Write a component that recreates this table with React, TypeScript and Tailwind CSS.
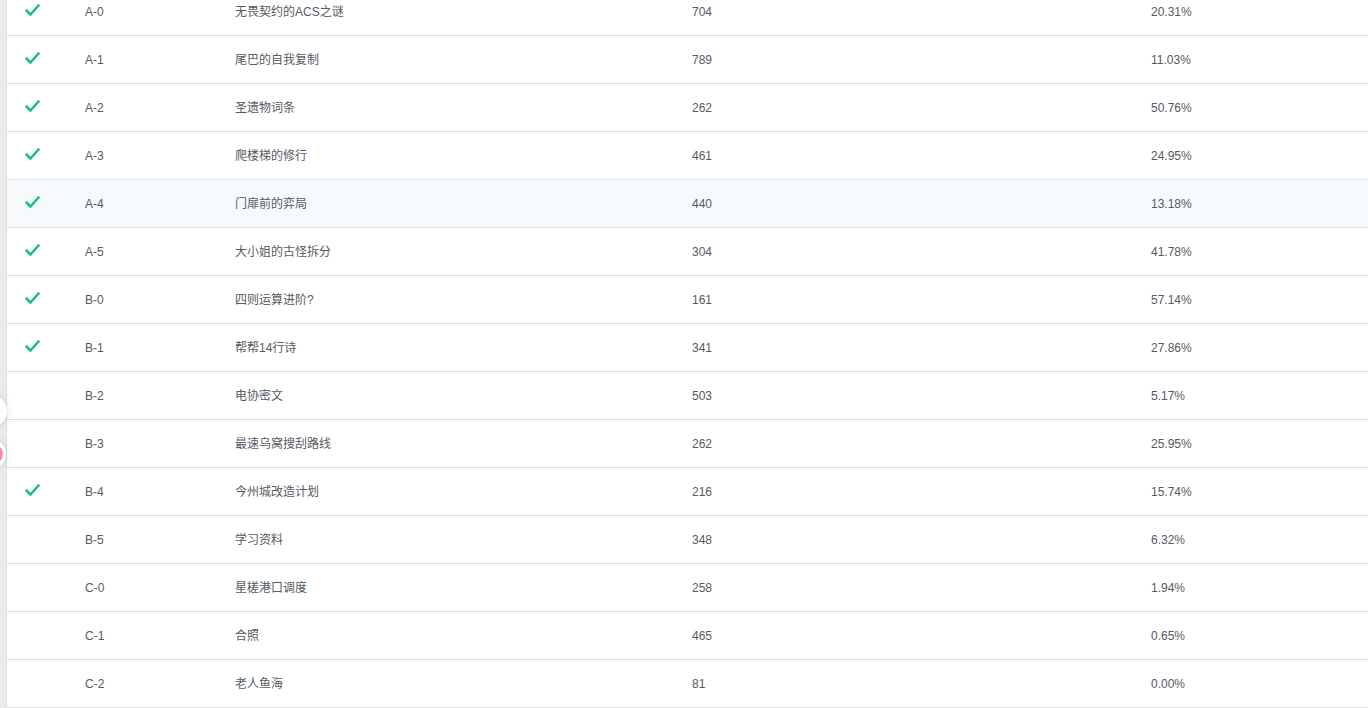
import React from "react";

const rows = [
  { done: true, id: "A-0", title: "无畏契约的ACS之谜", count: 704, rate: "20.31%" },
  { done: true, id: "A-1", title: "尾巴的自我复制", count: 789, rate: "11.03%" },
  { done: true, id: "A-2", title: "圣遗物词条", count: 262, rate: "50.76%" },
  { done: true, id: "A-3", title: "爬楼梯的修行", count: 461, rate: "24.95%" },
  { done: true, id: "A-4", title: "门扉前的弈局", count: 440, rate: "13.18%", hover: true },
  { done: true, id: "A-5", title: "大小姐的古怪拆分", count: 304, rate: "41.78%" },
  { done: true, id: "B-0", title: "四则运算进阶?", count: 161, rate: "57.14%" },
  { done: true, id: "B-1", title: "帮帮14行诗", count: 341, rate: "27.86%" },
  { done: false, id: "B-2", title: "电协密文", count: 503, rate: "5.17%" },
  { done: false, id: "B-3", title: "最速乌窝搜刮路线", count: 262, rate: "25.95%" },
  { done: true, id: "B-4", title: "今州城改造计划", count: 216, rate: "15.74%" },
  { done: false, id: "B-5", title: "学习资料", count: 348, rate: "6.32%" },
  { done: false, id: "C-0", title: "星槎港口调度", count: 258, rate: "1.94%" },
  { done: false, id: "C-1", title: "合照", count: 465, rate: "0.65%" },
  { done: false, id: "C-2", title: "老人鱼海", count: 81, rate: "0.00%" },
];

const Check = () => (
  <svg width="15" height="13" viewBox="0 0 15 13" fill="none">
    <path d="M1.5 6.5 L5.5 10.5 L13.5 1.5" stroke="#19c274" strokeWidth="2.6" strokeLinecap="round" strokeLinejoin="round" />
  </svg>
);

export default function App() {
  return (
    <div
      className="relative flex h-[708px] w-full overflow-hidden bg-[#ececec]"
      style={{ fontFamily: '"Liberation Sans", Arial, "Noto Sans CJK SC", sans-serif' }}
    >
      {/* gray page edge */}
      <div className="w-[7px] shrink-0 bg-[#ebebeb] border-r border-[#dedede]" />

      {/* table */}
      <div className="flex-1 bg-white">
        <div className="mt-[-12px]">
          {rows.map((r) => (
            <div
              key={r.id}
              className={`grid h-[48px] grid-cols-[78px_150px_457px_459px_1fr] items-center border-b border-[#e0e0e0] text-[12px] text-[#555a62] ${
                r.hover ? "bg-[#f6fafd]" : "bg-white"
              }`}
            >
              <div className="flex pl-[18px] pb-[2px]">{r.done && <Check />}</div>
              <div>{r.id}</div>
              <div>{r.title}</div>
              <div>{r.count}</div>
              <div>{r.rate}</div>
            </div>
          ))}
        </div>
      </div>

      {/* floating side buttons, mostly off screen */}
      <div className="absolute left-[-25px] top-[395px] h-[32px] w-[32px] rounded-full bg-white shadow-[0_0_8px_rgba(0,0,0,0.12)]" />
      <div className="absolute left-[-24px] top-[439px] flex h-[30px] w-[30px] items-center justify-center rounded-full bg-white shadow-[0_0_8px_rgba(0,0,0,0.12)]">
        <div className="ml-[3px] h-[20px] w-[20px] rounded-full bg-[#f08bb0]" />
      </div>
    </div>
  );
}
